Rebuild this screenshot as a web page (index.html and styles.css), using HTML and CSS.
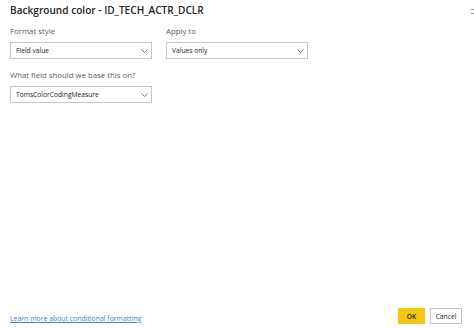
FILE: index.html
```html
<!DOCTYPE html>
<html>
<head>
<meta charset="utf-8">
<link rel="stylesheet" href="styles.css">
</head>
<body>
<div class="dialog">
  <div class="close-mark"></div>
  <h1 class="title">Background color - ID_TECH_ACTR_DCLR</h1>
  <div class="row">
    <div class="field">
      <div class="label">Format style</div>
      <div class="select"><span>Field value</span><svg class="chev" width="7" height="4" viewBox="0 0 7 4"><path d="M0.5 0.5 L3.5 3.5 L6.5 0.5" fill="none" stroke="#605e5c" stroke-width="0.8"/></svg></div>
    </div>
    <div class="field">
      <div class="label">Apply to</div>
      <div class="select"><span>Values only</span><svg class="chev" width="7" height="4" viewBox="0 0 7 4"><path d="M0.5 0.5 L3.5 3.5 L6.5 0.5" fill="none" stroke="#605e5c" stroke-width="0.8"/></svg></div>
    </div>
  </div>
  <div class="field single">
    <div class="label">What field should we base this on?</div>
    <div class="select"><span>TomsColorCodingMeasure</span><svg class="chev" width="7" height="4" viewBox="0 0 7 4"><path d="M0.5 0.5 L3.5 3.5 L6.5 0.5" fill="none" stroke="#605e5c" stroke-width="0.8"/></svg></div>
  </div>
  <div class="footer">
    <a class="link" href="#">Learn more about conditional formatting</a>
    <div class="buttons">
      <button class="btn ok">OK</button>
      <button class="btn cancel">Cancel</button>
    </div>
  </div>
</div>
</body>
</html>
```
FILE: styles.css
```css
html, body {
  margin: 0;
  padding: 0;
  background: #ffffff;
}
.dialog {
  position: relative;
  box-sizing: border-box;
  width: 474px;
  height: 328px;
  padding: 3px 11px 4px 10px;
  display: flex;
  flex-direction: column;
  font-family: "Open Sans", "Liberation Sans", sans-serif;
  color: #252423;
}
.close-mark {
  position: absolute;
  right: 0;
  top: 9px;
  width: 3px;
  height: 3px;
  border-top: 1px solid #9a9a9a;
  border-bottom: 1px solid #9a9a9a;
}
.title {
  margin: 0;
  font-size: 10.1px;
  font-weight: 600;
  line-height: 15px;
  color: #252423;
}
.row {
  display: flex;
  gap: 14px;
  margin-top: 7px;
}
.field {
  display: flex;
  flex-direction: column;
  width: 142px;
}
.label {
  font-size: 7.8px;
  line-height: 12px;
  color: #605e5c;
  margin-bottom: 5px;
}
.single {
  margin-top: 10px;
}
.select {
  box-sizing: border-box;
  height: 17px;
  border: 1px solid #c8c6c4;
  display: flex;
  align-items: center;
  justify-content: space-between;
  padding: 0 3px 0 5px;
  font-size: 6.7px;
  color: #252423;
}
.chev {
  display: block;
}
.footer {
  margin-top: auto;
  display: flex;
  align-items: center;
  justify-content: space-between;
}
.link {
  font-size: 6.9px;
  color: #3b7fd4;
  text-decoration: underline;
  margin-top: 4px;
}
.buttons {
  display: flex;
  gap: 5px;
  margin-right: 1px;
}
.btn {
  box-sizing: border-box;
  height: 16px;
  font-family: "Open Sans", "Liberation Sans", sans-serif;
  font-size: 6.7px;
  padding: 0;
  margin: 0;
  cursor: pointer;
}
.ok {
  width: 27px;
  background: #f2c811;
  border: 1px solid #f2c811;
  color: #252423;
  font-weight: 600;
}
.cancel {
  width: 32px;
  background: #ffffff;
  border: 1px solid #c8c6c4;
  color: #252423;
}
```
